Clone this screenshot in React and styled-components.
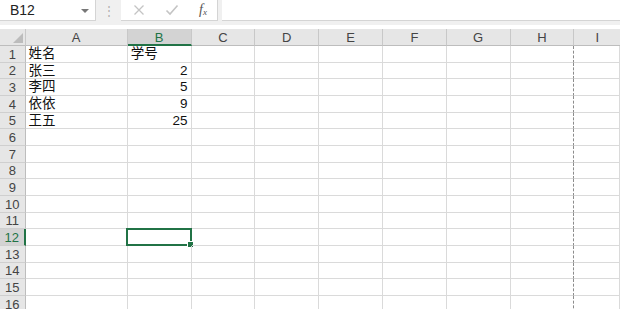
import React from 'react';
import styled, { createGlobalStyle } from 'styled-components';

const GREEN = '#217346';
const COLS = ['A', 'B', 'C', 'D', 'E', 'F', 'G', 'H', 'I'];
const ROWS = 16;

const data = {
  1: { A: '姓名', B: '学号' },
  2: { A: '张三', B: 2 },
  3: { A: '李四', B: 5 },
  4: { A: '依依', B: 9 },
  5: { A: '王五', B: 25 },
};

const selected = { col: 'B', row: 12 };

export default function App() {
  return (
    <>
      <GlobalStyle />
      <Page>
        <FormulaBar>
          <NameBox>
            <span>B12</span>
            <Caret />
          </NameBox>
          <Grip>⋮</Grip>
          <ActionBox>
            <ActionIcon>
              <svg width="12" height="12" viewBox="0 0 12 12">
                <path d="M1.5 1.5 L10.5 10.5 M10.5 1.5 L1.5 10.5" stroke="#c4c4c4" strokeWidth="1.3" fill="none" />
              </svg>
            </ActionIcon>
            <ActionIcon>
              <svg width="14" height="12" viewBox="0 0 14 12">
                <path d="M1.5 6.5 L5 10 L12.5 1.5" stroke="#c4c4c4" strokeWidth="1.6" fill="none" />
              </svg>
            </ActionIcon>
            <Fx>
              f<sub>x</sub>
            </Fx>
          </ActionBox>
          <FormulaInput />
        </FormulaBar>
        <Spacer />
        <Sheet>
          <Corner>
            <svg width="10" height="10" viewBox="0 0 10 10">
              <path d="M10 0 L10 10 L0 10 Z" fill="#bcbcbc" />
            </svg>
          </Corner>
          {COLS.map((c) => (
            <ColHead key={c} $active={c === selected.col} $last={c === 'I'}>
              {c}
            </ColHead>
          ))}
          {Array.from({ length: ROWS }, (_, i) => i + 1).map((r) => (
            <React.Fragment key={r}>
              <RowHead $active={r === selected.row}>{r}</RowHead>
              {COLS.map((c) => {
                const v = data[r]?.[c];
                const isSel = r === selected.row && c === selected.col;
                return (
                  <Cell key={c} $num={typeof v === 'number'} $break={c === 'H'}>
                    {v}
                    {isSel && (
                      <Selection>
                        <Handle />
                      </Selection>
                    )}
                  </Cell>
                );
              })}
            </React.Fragment>
          ))}
        </Sheet>
      </Page>
    </>
  );
}

const GlobalStyle = createGlobalStyle`
  html, body {
    margin: 0;
    padding: 0;
    background: #ffffff;
    overflow: hidden;
  }
  body {
    font-family: "Liberation Sans", "Noto Sans CJK SC", sans-serif;
  }
`;

const Page = styled.div`
  width: 620px;
  height: 309px;
  display: flex;
  flex-direction: column;
  overflow: hidden;
`;

const FormulaBar = styled.div`
  flex-shrink: 0;
  display: flex;
  align-items: stretch;
  height: 25px;
  padding-bottom: 4px;
  box-sizing: border-box;
  background: #f0f0f0;
`;

const NameBox = styled.div`
  width: 96px;
  box-sizing: border-box;
  background: #ffffff;
  border-bottom: 1px solid #d4d4d4;
  border-right: 1px solid #d4d4d4;
  display: flex;
  align-items: center;
  justify-content: space-between;
  padding: 0 6px 0 10px;
  font-size: 14px;
  color: #222;
`;

const Caret = styled.span`
  width: 0;
  height: 0;
  border-left: 4px solid transparent;
  border-right: 4px solid transparent;
  border-top: 4px solid #777;
  margin-top: 1px;
`;

const Grip = styled.div`
  width: 25px;
  display: flex;
  align-items: center;
  justify-content: center;
  color: #b0b0b0;
  font-size: 12px;
`;

const ActionBox = styled.div`
  width: 97px;
  box-sizing: border-box;
  background: #ffffff;
  border-bottom: 1px solid #d4d4d4;
  border-right: 1px solid #d4d4d4;
  display: flex;
  align-items: center;
  justify-content: space-between;
  padding: 0 10px 0 12px;
`;

const ActionIcon = styled.span`
  display: flex;
  align-items: center;
`;

const Fx = styled.span`
  font-family: "Liberation Serif", serif;
  font-style: italic;
  font-size: 14px;
  color: #555;
  line-height: 1;

  sub {
    font-size: 9px;
    vertical-align: -1px;
  }
`;

const FormulaInput = styled.div`
  flex: 1;
  margin-left: 4px;
  background: #ffffff;
  border-bottom: 1px solid #d4d4d4;
`;

const Spacer = styled.div`
  flex-shrink: 0;
  height: 4px;
  background: #ffffff;
`;

const Sheet = styled.div`
  flex-shrink: 0;
  display: grid;
  grid-template-columns: 25.5px 102.3px repeat(7, 63.8px) 1fr;
  grid-template-rows: 17px repeat(${ROWS}, 16.67px);
  background: #ffffff;
`;

const Corner = styled.div`
  background: #e6e6e6;
  border-right: 1px solid #c8c8c8;
  border-bottom: 1px solid #bdbdbd;
  display: flex;
  align-items: flex-end;
  justify-content: flex-end;
  padding: 0 2px 2px 0;
  box-sizing: border-box;
`;

const ColHead = styled.div`
  box-sizing: border-box;
  background: ${(p) => (p.$active ? '#d3d3d3' : '#e6e6e6')};
  color: ${(p) => (p.$active ? GREEN : '#444')};
  border-right: ${(p) => (p.$last ? 'none' : '1px solid #c8c8c8')};
  border-bottom: ${(p) => (p.$active ? `2px solid ${GREEN}` : '1px solid #bdbdbd')};
  font-size: 13px;
  display: flex;
  align-items: center;
  justify-content: center;
  padding-top: 1px;
`;

const RowHead = styled.div`
  box-sizing: border-box;
  background: ${(p) => (p.$active ? '#d3d3d3' : '#e6e6e6')};
  color: ${(p) => (p.$active ? GREEN : '#444')};
  border-right: ${(p) => (p.$active ? `2px solid ${GREEN}` : '1px solid #bdbdbd')};
  border-bottom: 1px solid #cfcfcf;
  font-size: 13px;
  display: flex;
  align-items: center;
  justify-content: center;
  padding-top: 1px;
`;

const Cell = styled.div`
  position: relative;
  box-sizing: border-box;
  border-right: ${(p) => (p.$break ? '1px dashed #8c8c8c' : '1px solid #dadada')};
  border-bottom: 1px solid #dadada;
  font-family: "Liberation Sans", "Noto Sans CJK SC", sans-serif;
  font-size: 13.5px;
  color: #111;
  display: flex;
  align-items: flex-end;
  justify-content: ${(p) => (p.$num ? 'flex-end' : 'flex-start')};
  padding: 0 3px 1px;
  white-space: nowrap;
  line-height: 1;
`;

const Selection = styled.div`
  position: absolute;
  left: -2px;
  top: -1px;
  right: -1px;
  bottom: -1px;
  border: 2px solid ${GREEN};
  pointer-events: none;
`;

const Handle = styled.div`
  position: absolute;
  right: -4px;
  bottom: -4px;
  width: 5px;
  height: 5px;
  background: ${GREEN};
  border: 1px solid #ffffff;
`;
